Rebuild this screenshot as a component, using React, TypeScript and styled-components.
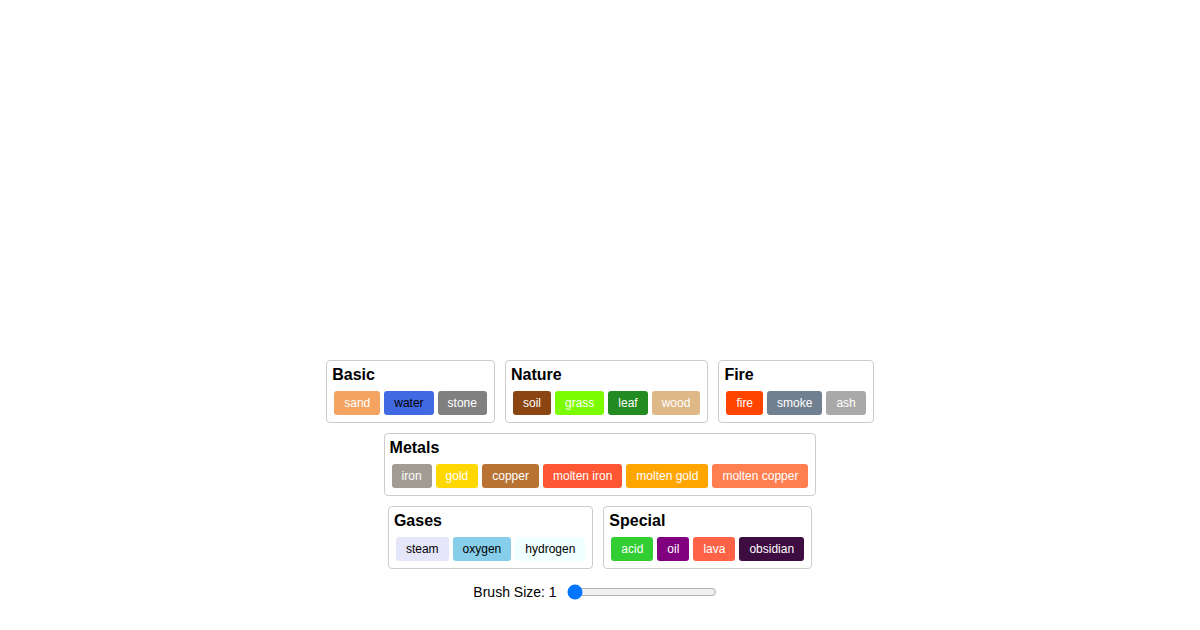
import React, { useState } from "react";
import styled, { createGlobalStyle } from "styled-components";

const GlobalStyle = createGlobalStyle`
  html, body {
    margin: 0;
    padding: 0;
    background: #ffffff;
    font-family: "Liberation Sans", Arial, sans-serif;
    color: #000;
  }
`;

const Page = styled.div`
  display: flex;
  flex-direction: column;
  align-items: center;
  width: 1200px;
`;

const Canvas = styled.div`
  width: 1200px;
  height: 350px;
  margin-bottom: 10px;
  background: #ffffff;
`;

const Groups = styled.div`
  display: flex;
  flex-wrap: wrap;
  justify-content: center;
  gap: 10px;
  width: 600px;
`;

const Group = styled.div`
  border: 1px solid #ccc;
  border-radius: 4px;
  padding: 5px;
`;

const Title = styled.h3`
  margin: 0 0 5px;
  font-size: 16px;
  font-weight: bold;
  line-height: 18px;
`;

const Buttons = styled.div`
  display: flex;
`;

const MatButton = styled.button<{ $bg: string; $fg: string }>`
  margin: 2px;
  padding: 5px 10px;
  border: none;
  border-radius: 3px;
  background: ${(p) => p.$bg};
  color: ${(p) => p.$fg};
  font-family: "Liberation Sans", Arial, sans-serif;
  font-size: 12px;
  line-height: 14px;
  cursor: pointer;
  white-space: nowrap;
`;

const BrushRow = styled.div`
  display: flex;
  align-items: center;
  height: 26px;
  margin-top: 10px;
  font-size: 14px;
`;

const Slider = styled.input`
  width: 150px;
  margin: 0 10px 0 10px;
`;

type Mat = { name: string; bg: string; fg: string };

const W = "#ffffff";
const B = "#000000";

const groups: { title: string; items: Mat[] }[] = [
  {
    title: "Basic",
    items: [
      { name: "sand", bg: "#f4a460", fg: W },
      { name: "water", bg: "#4169e1", fg: B },
      { name: "stone", bg: "#808080", fg: W },
    ],
  },
  {
    title: "Nature",
    items: [
      { name: "soil", bg: "#8b4513", fg: W },
      { name: "grass", bg: "#7cfc00", fg: W },
      { name: "leaf", bg: "#228b22", fg: W },
      { name: "wood", bg: "#deb887", fg: W },
    ],
  },
  {
    title: "Fire",
    items: [
      { name: "fire", bg: "#ff4500", fg: W },
      { name: "smoke", bg: "#708090", fg: W },
      { name: "ash", bg: "#a9a9a9", fg: W },
    ],
  },
  {
    title: "Metals",
    items: [
      { name: "iron", bg: "#a19d94", fg: W },
      { name: "gold", bg: "#ffd700", fg: W },
      { name: "copper", bg: "#b87333", fg: W },
      { name: "molten iron", bg: "#ff5733", fg: W },
      { name: "molten gold", bg: "#ffa500", fg: W },
      { name: "molten copper", bg: "#ff7f50", fg: W },
    ],
  },
  {
    title: "Gases",
    items: [
      { name: "steam", bg: "#e6e6fa", fg: B },
      { name: "oxygen", bg: "#87ceeb", fg: B },
      { name: "hydrogen", bg: "#f0ffff", fg: B },
    ],
  },
  {
    title: "Special",
    items: [
      { name: "acid", bg: "#32cd32", fg: W },
      { name: "oil", bg: "#800080", fg: W },
      { name: "lava", bg: "#ff6347", fg: W },
      { name: "obsidian", bg: "#3d0c40", fg: W },
    ],
  },
];

export default function App() {
  const [size, setSize] = useState(1);
  const [, setMaterial] = useState("sand");

  return (
    <Page>
      <GlobalStyle />
      <Canvas />
      <Groups>
        {groups.map((g) => (
          <Group key={g.title}>
            <Title>{g.title}</Title>
            <Buttons>
              {g.items.map((m) => (
                <MatButton
                  key={m.name}
                  $bg={m.bg}
                  $fg={m.fg}
                  onClick={() => setMaterial(m.name)}
                >
                  {m.name}
                </MatButton>
              ))}
            </Buttons>
          </Group>
        ))}
      </Groups>
      <BrushRow>
        Brush Size: {size}
        <Slider
          type="range"
          min={1}
          max={10}
          value={size}
          onChange={(e) => setSize(Number(e.target.value))}
        />
      </BrushRow>
    </Page>
  );
}
